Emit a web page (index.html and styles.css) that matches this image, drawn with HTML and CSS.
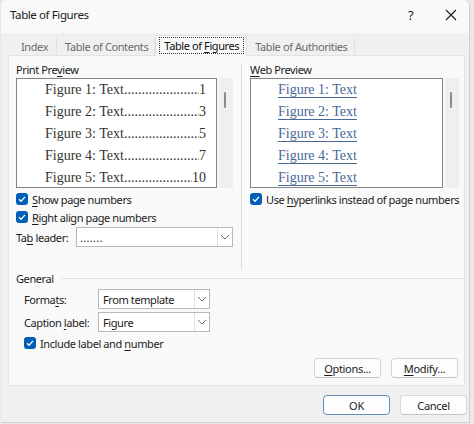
FILE: index.html
```html
<!DOCTYPE html>
<html lang="en">
<head>
<meta charset="utf-8">
<title>Table of Figures</title>
<link rel="stylesheet" href="styles.css">
</head>
<body>
<div class="window">
  <header class="titlebar">
    <span class="title">Table of Figures</span>
    <span class="help">?</span>
    <span class="close">
      <svg width="12" height="12" viewBox="0 0 12 12"><path d="M1 1L11 11M11 1L1 11" stroke="#1a1a1a" stroke-width="1.1" fill="none"/></svg>
    </span>
  </header>

  <nav class="tabs">
    <span class="tab">Index</span>
    <span class="tab">Table of Contents</span>
    <span class="tab active"><span class="focus">Table of <u>F</u>igures</span></span>
    <span class="tab">Table of Authorities</span>
  </nav>

  <section class="panel">
    <div class="previews">
      <div class="col col-left">
        <div class="label">Print Pre<u>v</u>iew</div>
        <div class="preview-wrap">
          <div class="preview print">
            <div class="entry"><span>Figure 1: Text</span><span class="leader"></span><span>1</span></div>
            <div class="entry"><span>Figure 2: Text</span><span class="leader"></span><span>3</span></div>
            <div class="entry"><span>Figure 3: Text</span><span class="leader"></span><span>5</span></div>
            <div class="entry"><span>Figure 4: Text</span><span class="leader"></span><span>7</span></div>
            <div class="entry"><span>Figure 5: Text</span><span class="leader"></span><span>10</span></div>
          </div>
          <div class="scroll"><span class="thumb"></span></div>
        </div>
        <div class="check first"><span class="box"><svg width="10" height="10" viewBox="0 0 10 10"><path d="M2 5.2L4.1 7.2L8 2.9" stroke="#fff" stroke-width="1.3" fill="none"/></svg></span><span><u>S</u>how page numbers</span></div>
        <div class="check"><span class="box"><svg width="10" height="10" viewBox="0 0 10 10"><path d="M2 5.2L4.1 7.2L8 2.9" stroke="#fff" stroke-width="1.3" fill="none"/></svg></span><span><u>R</u>ight align page numbers</span></div>
        <div class="field-row leader-row">
          <span class="field-label">Ta<u>b</u> leader:</span>
          <div class="combo wide"><span class="value dots">.......</span><span class="arrow"><svg width="10" height="6" viewBox="0 0 10 6"><path d="M1 1L5 5L9 1" stroke="#6a6a6a" stroke-width="1" fill="none"/></svg></span></div>
        </div>
      </div>

      <div class="divider"></div>

      <div class="col col-right">
        <div class="label"><u>W</u>eb Preview</div>
        <div class="preview-wrap">
          <div class="preview web">
            <div class="link">Figure 1: Text</div>
            <div class="link">Figure 2: Text</div>
            <div class="link">Figure 3: Text</div>
            <div class="link">Figure 4: Text</div>
            <div class="link">Figure 5: Text</div>
          </div>
          <div class="scroll"><span class="thumb"></span></div>
        </div>
        <div class="check first"><span class="box"><svg width="10" height="10" viewBox="0 0 10 10"><path d="M2 5.2L4.1 7.2L8 2.9" stroke="#fff" stroke-width="1.3" fill="none"/></svg></span><span class="nowrap">Use <u>h</u>yperlinks instead of page numbers</span></div>
      </div>
    </div>

    <div class="group">
      <div class="group-head"><span>General</span><span class="rule"></span></div>
      <div class="group-body">
        <div class="field-row">
          <span class="field-label short">Forma<u>t</u>s:</span>
          <div class="combo"><span class="value">From template</span><span class="arrow"><svg width="10" height="6" viewBox="0 0 10 6"><path d="M1 1L5 5L9 1" stroke="#6a6a6a" stroke-width="1" fill="none"/></svg></span></div>
        </div>
        <div class="field-row">
          <span class="field-label short">Caption <u>l</u>abel:</span>
          <div class="combo"><span class="value">Figure</span><span class="arrow"><svg width="10" height="6" viewBox="0 0 10 6"><path d="M1 1L5 5L9 1" stroke="#6a6a6a" stroke-width="1" fill="none"/></svg></span></div>
        </div>
        <div class="check include"><span class="box"><svg width="10" height="10" viewBox="0 0 10 10"><path d="M2 5.2L4.1 7.2L8 2.9" stroke="#fff" stroke-width="1.3" fill="none"/></svg></span><span>Include label and <u>n</u>umber</span></div>
      </div>
    </div>

    <div class="actions">
      <button class="btn"><u>O</u>ptions...</button>
      <button class="btn"><u>M</u>odify...</button>
    </div>
  </section>

  <footer class="footer">
    <button class="btn default">OK</button>
    <button class="btn">Cancel</button>
  </footer>
</div>
</body>
</html>
```

FILE: styles.css
```css
* { box-sizing: border-box; }

html, body {
  margin: 0;
  padding: 0;
  width: 474px;
  height: 424px;
  overflow: hidden;
  background: #e9e9e9;
  font-family: "Noto Sans", "DejaVu Sans", sans-serif;
  font-size: 11px;
  letter-spacing: -0.4px;
  color: #1b1b1b;
}

u { text-decoration: underline; text-underline-offset: 2px; }
.nowrap { white-space: nowrap; }

.window {
  width: 469px;
  height: 423px;
  margin-left: 1px;
  background: #f0f0f0;
  border-right: 1px solid #cfcfcf;
  border-bottom: 1px solid #cfcfcf;
  border-radius: 6px 6px 0 0;
  display: flex;
  flex-direction: column;
}

/* title bar */
.titlebar {
  height: 33px;
  flex: none;
  display: flex;
  align-items: center;
  background: #f9f9f9;
  border-radius: 6px 6px 0 0;
  padding-left: 9px;
}
.title { font-size: 11.5px; flex: 1; padding-bottom: 4px; }
.help { font-size: 13px; width: 12px; margin-right: 25px; padding-bottom: 4px; }
.close { width: 12px; margin-right: 12px; display: flex; padding-bottom: 4px; }

/* tab strip */
.tabs {
  height: 22px;
  flex: none;
  display: flex;
  align-items: flex-end;
  padding-left: 8px;
  position: relative;
  z-index: 1;
}
.tab {
  height: 18px;
  display: flex;
  align-items: center;
  padding: 0 6px 0 8px;
  color: #6b6b6b;
  border-right: 1px solid #e1e1e1;
  border-top: 1px solid transparent;
  background: #f0f0f0;
}
.tab:first-child { padding: 0 8px 0 12px; }
.tab.active {
  height: 21px;
  margin-bottom: -1px;
  color: #111;
  background: #f9f9f9;
  border: 1px solid #e1e1e1;
  border-bottom: none;
  padding: 0 2px 1px 3px;
}
.tab.active + .tab { padding-left: 8px; }
.focus {
  border: 1px dotted #333;
  padding: 1px 4px;
  line-height: 13px;
}

/* main page of the tab */
.panel {
  margin-left: 7px;
  width: 457px;
  height: 331px;
  flex: none;
  background: #f9f9f9;
  border: 1px solid #e3e3e3;
  display: flex;
  flex-direction: column;
}

.previews {
  display: flex;
  height: 212px;
  padding: 7px 0 0 7px;
}
.col { display: flex; flex-direction: column; }
.col-left { width: 217px; }
.col-right { width: 209px; }
.divider {
  width: 1px;
  background: #dcdcdc;
  margin: 0 8px;
  height: 206px;
}

.label { line-height: 14px; height: 15px; }

.preview-wrap { display: flex; gap: 2px; height: 110px; }
.preview {
  flex: 1;
  background: #fff;
  border: 1px solid #858585;
  overflow: hidden;
  font-family: "Liberation Serif", "Times New Roman", serif;
  font-size: 14px;
  letter-spacing: 0;
  color: #333;
}
.scroll {
  width: 14px;
  background: #efefef;
  position: relative;
}
.thumb {
  position: absolute;
  left: 5px;
  top: 14px;
  width: 2px;
  height: 16px;
  background: #8a8a8a;
  border-radius: 1px;
}

.print { padding: 0 10px 0 28px; }
.entry { display: flex; line-height: 22px; height: 22px; white-space: nowrap; }
.leader { flex: 1; overflow: hidden; }
.leader::before { content: "........................................................"; }

.web { padding-left: 27px; }
.link {
  line-height: 22px;
  height: 22px;
  color: #4a6896;
  text-decoration: underline;
  text-decoration-color: #4a6896;
  text-underline-offset: 3px;
}

/* checkboxes */
.check {
  display: flex;
  align-items: center;
  gap: 4px;
  height: 18px;
}
.check.first { margin-top: 2px; }
.box {
  width: 12px;
  height: 12px;
  border-radius: 3px;
  background: #005fb8;
  display: flex;
  align-items: center;
  justify-content: center;
  flex: none;
}

.field-row { display: flex; align-items: center; }
.leader-row { margin-top: 1px; }
.field-label { width: 60px; }
.field-label.short { width: 74px; }

.combo {
  width: 112px;
  height: 20px;
  background: #fff;
  border: 1px solid #b8b8b8;
  display: flex;
  align-items: center;
}
.combo.wide { width: 157px; }
.value { flex: 1; padding-left: 4px; }
.value.dots { padding-left: 3px; letter-spacing: 0.3px; }
.arrow {
  width: 15px;
  height: 18px;
  border-left: 1px solid #e0e0e0;
  display: flex;
  align-items: center;
  justify-content: center;
}

/* General group */
.group { padding: 3px 0 0 7px; }
.group-head { display: flex; align-items: center; height: 14px; }
.rule { flex: 1; height: 1px; background: #e0e0e0; margin-left: 7px; margin-right: 1px; }
.group-body { padding: 4px 0 0 8px; display: flex; flex-direction: column; gap: 3px; }
.check.include { margin-top: -1px; }

.actions {
  display: flex;
  justify-content: flex-end;
  gap: 10px;
  padding: 6px 6px 0 0;
}

.btn {
  width: 67px;
  height: 20px;
  background: #fdfdfd;
  border: 1px solid #d6d6d6;
  border-bottom-color: #c4c4c4;
  border-radius: 4px;
  font-family: inherit;
  font-size: 11px;
  letter-spacing: -0.3px;
  color: #1b1b1b;
  padding: 0;
}

.footer {
  display: flex;
  justify-content: flex-end;
  gap: 10px;
  padding: 9px 2px 0 0;
}
.btn.default { border: 1px solid #5f8fba; }
```
